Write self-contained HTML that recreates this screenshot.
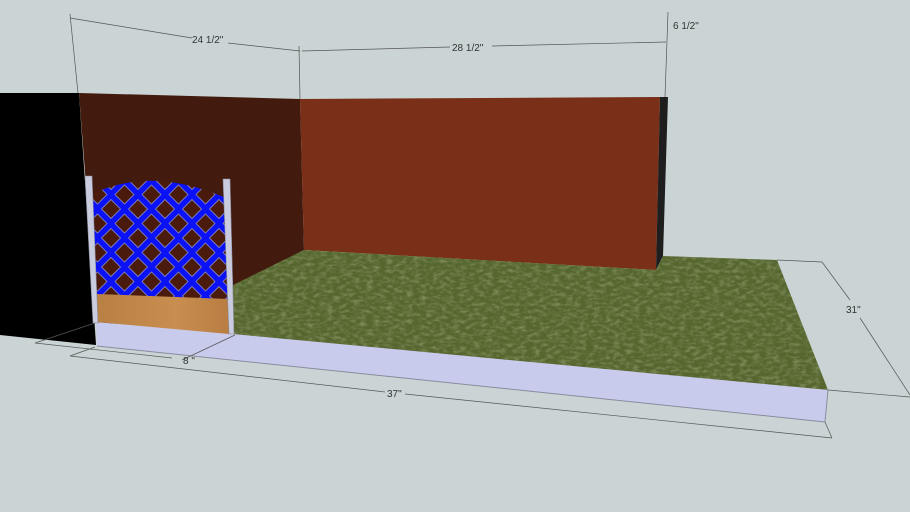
<!DOCTYPE html>
<html><head><meta charset="utf-8"><style>
html,body{margin:0;padding:0;background:#cad4d4;}
svg{display:block;}
text{font-family:"Liberation Sans",sans-serif;font-size:10px;fill:#333;}
</style></head><body>
<svg width="910" height="512" viewBox="0 0 910 512" xmlns="http://www.w3.org/2000/svg">
<defs>
<pattern id="lat" width="27" height="29" patternUnits="userSpaceOnUse" x="84" y="180">
<rect width="27" height="29" fill="#0b12f5"/>
<g fill="#4a1a0c" stroke="#8a8ac0" stroke-width="0.8">
<polygon points="0,-9.5 9.5,0 0,9.5 -9.5,0"/>
<polygon points="27,-9.5 36.5,0 27,9.5 17.5,0"/>
<polygon points="0,19.5 9.5,29 0,38.5 -9.5,29"/>
<polygon points="27,19.5 36.5,29 27,38.5 17.5,29"/>
<polygon points="13.5,5 23,14.5 13.5,24 4,14.5"/>
</g>
</pattern>
<filter id="grass" x="0" y="0" width="100%" height="100%">
<feTurbulence type="fractalNoise" baseFrequency="0.15 0.3" numOctaves="3" seed="4"/>
<feColorMatrix type="matrix" values="0 0 0 0 0.45  0 0 0 0 0.52  0 0 0 0 0.3  0 0 0 -2 1.2"/>
<feComposite in2="SourceGraphic" operator="in"/>
</filter>
<linearGradient id="wood" x1="0" x2="1"><stop offset="0" stop-color="#b98043"/><stop offset="0.6" stop-color="#c88e50"/><stop offset="1" stop-color="#b97d42"/></linearGradient>
</defs>
<rect width="910" height="512" fill="#cad4d4"/>
<polygon points="0,93 79,93 96,345 0,335" fill="#000"/>
<polygon points="79,93 300,99 304,250 235,285 97,330" fill="#421b0e"/>
<polygon points="300,99 660,97 656,270 304,250" fill="#7a3018"/>
<polygon points="660,97 668,97 663,256 656,270" fill="#1e1e1e"/>
<polygon points="304,250 656,270 663,256 777,260 828,390 233,336 233,285" fill="#56662f"/>
<polygon points="304,250 656,270 663,256 777,260 828,390 233,336 233,285" fill="#7a8a55" filter="url(#grass)" opacity="0.45"/>
<polygon points="96,322 233,334 828,390 825,422 97,346" fill="#c8cbec"/>
<line x1="97" y1="346" x2="825" y2="422" stroke="#8a8c9e" stroke-width="1"/>
<line x1="828" y1="390" x2="825" y2="422" stroke="#8a8c9e" stroke-width="1"/>
<path d="M90,195 Q150,165 226,198 L229,300 L97,296 Z" fill="url(#lat)"/>
<polygon points="97,294 229,299 229,334 97,322" fill="url(#wood)"/>
<polygon points="85,176 92,176 98,323 93,323" fill="#c8ccde" stroke="#8a8c9c" stroke-width="0.6"/>
<polygon points="223,179 230,179 234,334 229,334" fill="#c8ccde" stroke="#8a8c9c" stroke-width="0.6"/>
<g stroke="#555" stroke-width="0.7" fill="none">
<line x1="70" y1="14" x2="78" y2="93"/>
<line x1="299" y1="46" x2="300" y2="99"/>
<line x1="668" y1="12" x2="665" y2="97"/>
<polyline points="70,18 192,38"/><polyline points="228,43 300,51"/>
<polyline points="302,51 450,47"/><polyline points="492,46 666,42"/>
<line x1="777" y1="260" x2="822" y2="262"/>
<line x1="822" y1="262" x2="850" y2="300"/>
<line x1="860" y1="318" x2="910" y2="395"/>
<line x1="828" y1="390" x2="910" y2="397"/>
<line x1="825" y1="422" x2="832" y2="438"/>
<line x1="35" y1="343" x2="172" y2="358"/>
<line x1="70" y1="356" x2="385" y2="392"/>
<line x1="405" y1="394" x2="832" y2="438"/>
<line x1="70" y1="356" x2="95" y2="347"/>
<line x1="182" y1="360" x2="235" y2="335"/>
<line x1="35" y1="343" x2="95" y2="323"/>
</g>
<text x="192" y="43">24 1/2"</text>
<text x="452" y="51">28 1/2"</text>
<text x="673" y="29">6 1/2"</text>
<text x="846" y="313">31"</text>
<text x="387" y="397">37"</text>
<text x="183" y="364">8 "</text>
</svg>
</body></html>
